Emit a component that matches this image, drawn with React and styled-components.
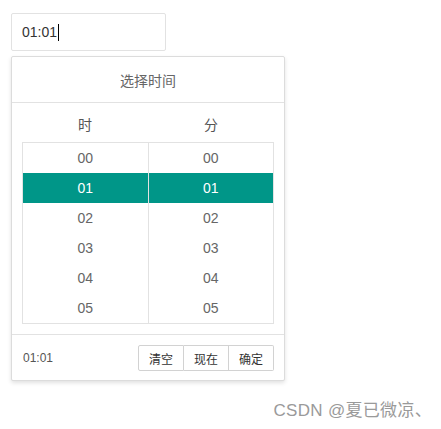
import React from "react";
import styled, { createGlobalStyle } from "styled-components";

const GlobalStyle = createGlobalStyle`
  html, body {
    margin: 0;
    padding: 0;
    background: #fff;
    font-family: "Liberation Sans", "Noto Sans CJK SC", sans-serif;
  }
`;

const Page = styled.div`
  position: relative;
  width: 441px;
  height: 429px;
  padding: 13px 0 0 11px;
  box-sizing: border-box;
`;

const Input = styled.div`
  width: 155px;
  height: 38px;
  box-sizing: border-box;
  border: 1px solid #e2e2e2;
  border-radius: 2px;
  padding-left: 10px;
  display: flex;
  align-items: center;
  font-size: 14px;
  color: #333;
`;

const Caret = styled.span`
  display: inline-block;
  width: 1px;
  height: 17px;
  background: #000;
  margin-left: 1px;
`;

const Popup = styled.div`
  margin-top: 5px;
  width: 274px;
  box-sizing: border-box;
  border: 1px solid #dcdcdc;
  border-radius: 2px;
  box-shadow: 0 2px 4px rgba(0, 0, 0, 0.12);
  background: #fff;
`;

const Header = styled.div`
  height: 45px;
  display: flex;
  align-items: center;
  justify-content: center;
  border-bottom: 1px solid #e2e2e2;
  font-size: 14px;
  color: #666;
`;

const Main = styled.div`
  padding: 0 10px 10px;
`;

const ColHeads = styled.div`
  display: flex;
  height: 39px;
`;

const ColHead = styled.div`
  flex: 1;
  display: flex;
  align-items: center;
  justify-content: center;
  padding-top: 3px;
  font-size: 14px;
  color: #555;
`;

const List = styled.div`
  display: flex;
  border: 1px solid #e2e2e2;
`;

const Column = styled.ul`
  flex: 1;
  margin: 0;
  padding: 0;
  list-style: none;
  & + & {
    border-left: 1px solid #e2e2e2;
  }
`;

const Cell = styled.li`
  height: 30px;
  line-height: 30px;
  text-align: center;
  font-size: 14px;
  color: ${(p) => (p.$active ? "#fff" : "#666")};
  background: ${(p) => (p.$active ? "#009688" : "transparent")};
`;

const Footer = styled.div`
  height: 45px;
  border-top: 1px solid #e2e2e2;
  display: flex;
  align-items: center;
  justify-content: space-between;
  padding: 0 10px 0 11px;
`;

const Preview = styled.span`
  font-size: 12px;
  color: #555;
`;

const BtnGroup = styled.div`
  display: flex;
  margin-top: 1px;
`;

const Btn = styled.span`
  height: 26px;
  box-sizing: border-box;
  padding: 0 10px;
  display: flex;
  align-items: center;
  font-size: 12px;
  color: #333;
  border: 1px solid #d2d2d2;
  & + & {
    border-left: none;
  }
  &:first-child {
    border-radius: 2px 0 0 2px;
  }
  &:last-child {
    border-radius: 0 2px 2px 0;
  }
`;

const Watermark = styled.div`
  position: absolute;
  right: 9px;
  bottom: 8px;
  font-size: 17px;
  color: #9a9a9a;
  letter-spacing: 0.3px;
`;

const hours = ["00", "01", "02", "03", "04", "05"];

const App = () => {
  return (
    <Page>
      <GlobalStyle />
      <Input>
        01:01
        <Caret />
      </Input>
      <Popup>
        <Header>选择时间</Header>
        <Main>
          <ColHeads>
            <ColHead>时</ColHead>
            <ColHead>分</ColHead>
          </ColHeads>
          <List>
            <Column>
              {hours.map((h) => (
                <Cell key={h} $active={h === "01"}>{h}</Cell>
              ))}
            </Column>
            <Column>
              {hours.map((m) => (
                <Cell key={m} $active={m === "01"}>{m}</Cell>
              ))}
            </Column>
          </List>
        </Main>
        <Footer>
          <Preview>01:01</Preview>
          <BtnGroup>
            <Btn>清空</Btn>
            <Btn>现在</Btn>
            <Btn>确定</Btn>
          </BtnGroup>
        </Footer>
      </Popup>
      <Watermark>CSDN @夏已微凉、</Watermark>
    </Page>
  );
};

export default App;
